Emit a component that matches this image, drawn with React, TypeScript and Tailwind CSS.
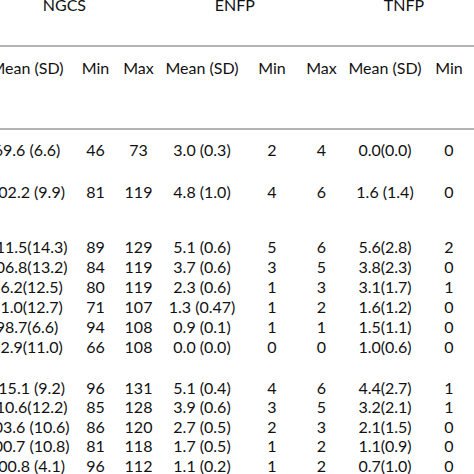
import React from "react";

const groups: string[][][] = [
  [
    ["69.6 (6.6)", "46", "73", "3.0 (0.3)", "2", "4", "0.0(0.0)", "0"],
  ],
  [
    ["102.2 (9.9)", "81", "119", "4.8 (1.0)", "4", "6", "1.6 (1.4)", "0"],
  ],
  [
    ["111.5(14.3)", "89", "129", "5.1 (0.6)", "5", "6", "5.6(2.8)", "2"],
    ["106.8(13.2)", "84", "119", "3.7 (0.6)", "3", "5", "3.8(2.3)", "0"],
    ["96.2(12.5)", "80", "119", "2.3 (0.6)", "1", "3", "3.1(1.7)", "1"],
    ["91.0(12.7)", "71", "107", "1.3 (0.47)", "1", "2", "1.6(1.2)", "0"],
    ["98.7(6.6)", "94", "108", "0.9 (0.1)", "1", "1", "1.5(1.1)", "0"],
    ["82.9(11.0)", "66", "108", "0.0 (0.0)", "0", "0", "1.0(0.6)", "0"],
  ],
  [
    ["115.1 (9.2)", "96", "131", "5.1 (0.4)", "4", "6", "4.4(2.7)", "1"],
    ["110.6(12.2)", "85", "128", "3.9 (0.6)", "3", "5", "3.2(2.1)", "1"],
    ["103.6 (10.6)", "86", "120", "2.7 (0.5)", "2", "3", "2.1(1.5)", "0"],
    ["100.7 (10.8)", "81", "118", "1.7 (0.5)", "1", "2", "1.1(0.9)", "0"],
    ["100.8 (4.1)", "96", "112", "1.1 (0.2)", "1", "2", "0.7(1.0)", "0"],
  ],
];

const gridCls =
  "grid grid-cols-[94px_43px_43px_84px_56px_43px_84px_44px] -ml-[20px] w-[491px]";

function Row({ cells, h }: { cells: string[]; h: string }) {
  return (
    <div className={`${gridCls} ${h}`}>
      {cells.map((c, i) => (
        <div key={i} className="flex justify-center items-center whitespace-nowrap">
          {c}
        </div>
      ))}
    </div>
  );
}

export default function App() {
  return (
    <div
      className="w-[474px] h-[474px] overflow-hidden bg-white text-[#111111] text-[16px] leading-[20px]"
      style={{ fontFamily: "Lato, 'Open Sans', sans-serif" }}
    >
      <div className="-mt-[5px] flex flex-col">
        <div className="flex h-[20px] -ml-[7px] whitespace-nowrap">
          <div className="w-[152px] flex justify-center">NGCS</div>
          <div className="w-[211px] flex justify-center">ENFP</div>
          <div className="w-[149px] flex justify-center">TNFP</div>
        </div>
        <div className="mt-[30px] h-[2px] bg-[#b4b4b4]" />
        <div className="mt-[11px]">
          <Row
            h="h-[20px]"
            cells={["Mean (SD)", "Min", "Max", "Mean (SD)", "Min", "Max", "Mean (SD)", "Min"]}
          />
        </div>
        <div className="mt-[50px] h-[2px] bg-[#b4b4b4]" />
        <div className="mt-[10px]">
          {groups[0].map((r, i) => (
            <Row key={i} cells={r} h="h-[20px]" />
          ))}
        </div>
        <div className="mt-[22px]">
          {groups[1].map((r, i) => (
            <Row key={i} cells={r} h="h-[20px]" />
          ))}
        </div>
        <div className="mt-[35px]">
          {groups[2].map((r, i) => (
            <Row key={i} cells={r} h="h-[20px]" />
          ))}
        </div>
        <div className="mt-[20.5px]">
          {groups[3].map((r, i) => (
            <Row key={i} cells={r} h="h-[19.5px]" />
          ))}
        </div>
      </div>
    </div>
  );
}
